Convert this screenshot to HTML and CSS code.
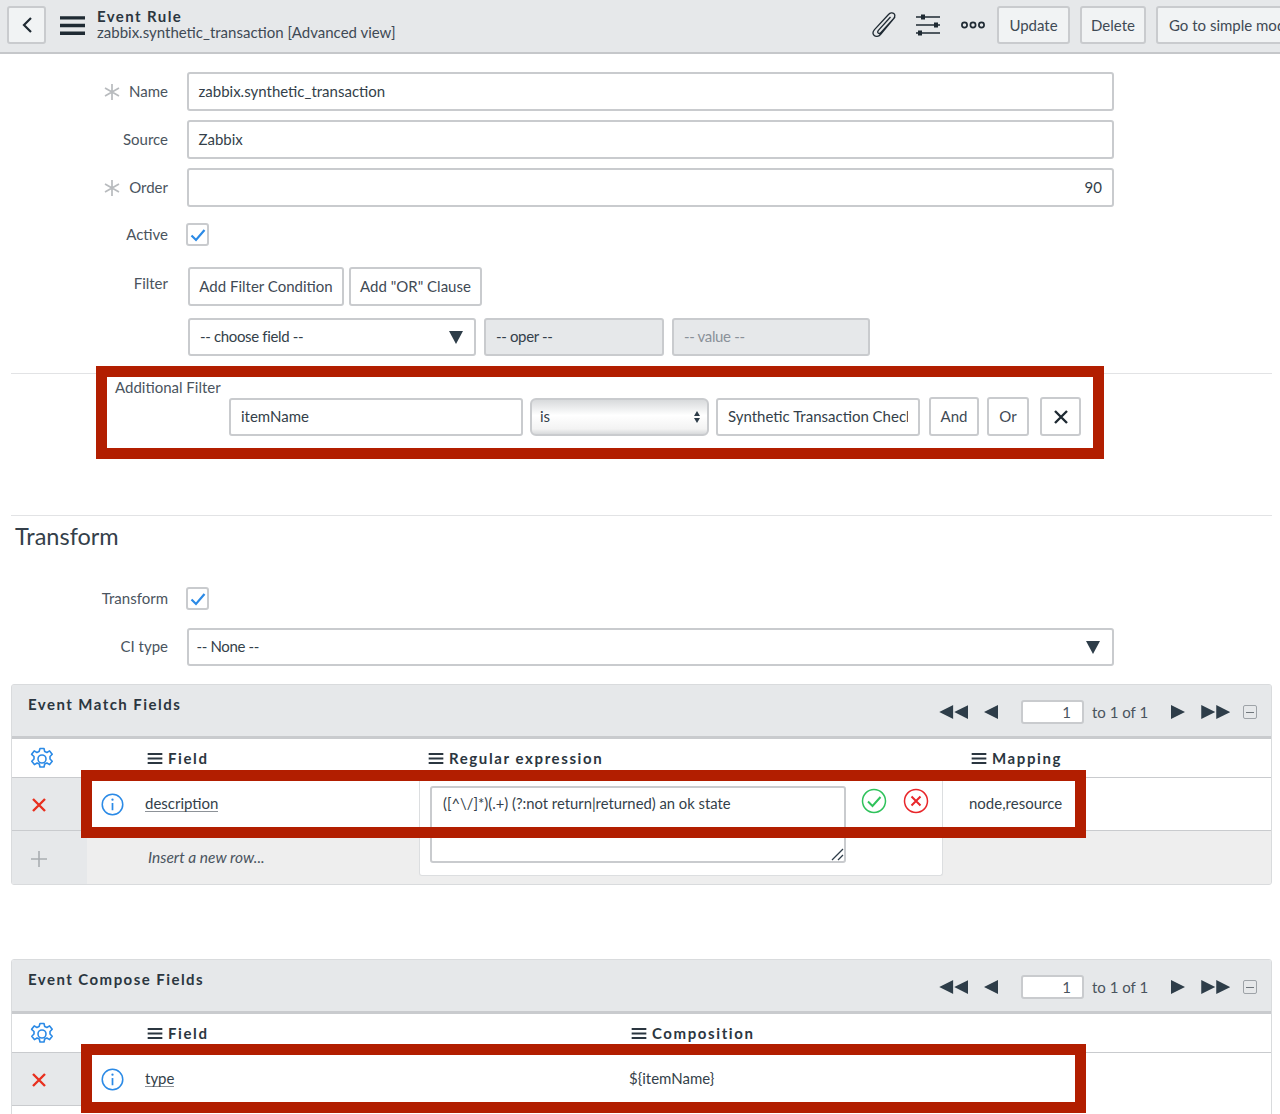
FILE: index.html
```html
<!DOCTYPE html>
<html lang="en">
<head>
    <meta charset="UTF-8">
    <meta name="viewport" content="width=device-width, initial-scale=1.0">
    <title>Event Rule</title>
    <link rel="stylesheet" href="styles.css">
</head>
<body>
    <svg class="defs" width="0" height="0">
        <symbol id="menu" viewBox="0 0 16 12"><path d="M0 1.100h16M0 6h16M0 10.900h16" stroke="currentColor" stroke-width="2.200" fill="none"/></symbol>
        <symbol id="star" viewBox="0 0 16 16"><path d="M8 0v16M1 4l14 8M15 4L1 12" stroke="#b8bbbe" stroke-width="1.700" fill="none"/></symbol>
        <symbol id="gear" viewBox="0 0 24 24"><g fill="none" stroke="#2b8ae6" stroke-width="1.600" stroke-linejoin="round"><path d="M10 1.500h4l.7 3 2.200 1 2.700-1.600 2.600 3.400-2.200 2.200v2.500l2.200 2.200-2.600 3.400-2.700-1.600-2.200 1-.7 3h-4l-.7-3-2.200-1-2.700 1.600-2.600-3.400 2.200-2.200V9.500L1.600 7.300l2.600-3.400 2.700 1.600 2.200-1z"/><circle cx="12" cy="12" r="4"/></g></symbol>
        <symbol id="info" viewBox="0 0 24 24"><circle cx="12" cy="12" r="10.700" fill="none" stroke="#2b8ae6" stroke-width="1.600"/><path d="M12 10.500v7.500" stroke="#2b8ae6" stroke-width="1.800"/><circle cx="12" cy="7" r="1.200" fill="#2b8ae6"/></symbol>
        <symbol id="cross" viewBox="0 0 16 16"><path d="M2 2l12 12M14 2L2 14" stroke="currentColor" stroke-width="2.400" fill="none"/></symbol>
        <symbol id="tri-left" viewBox="0 0 14 14"><path d="M14 0v14L0 7z" fill="#2e3d49"/></symbol>
        <symbol id="tri-right" viewBox="0 0 14 14"><path d="M0 0v14l14-7z" fill="#2e3d49"/></symbol>
    </svg>

    <div class="page">
        <header class="topbar">
            <button class="btn btn-back">
                <svg width="12" height="18" viewBox="0 0 12 18"><path d="M10 2L3 9l7 7" fill="none" stroke="#1f2a33" stroke-width="2.200"/></svg>
            </button>
            <svg class="topbar-menu"><use href="#menu"/></svg>
            <div class="topbar-title">
                <div class="topbar-name">Event Rule</div>
                <div class="topbar-sub">zabbix.synthetic_transaction [Advanced view]</div>
            </div>
            <div class="topbar-actions">
                <svg class="icon-clip" width="26" height="26" viewBox="0 0 26 26"><path d="M24 5L9.500 22.500c-2 2.300-4.800 2.400-6.300 1-1.500-1.400-1.400-3.900.3-5.900L17.500 2.500c1.700-1.900 4-2.100 5.300-.9 1.300 1.200 1.300 3.200-.3 5.100L10 20.500c-.9 1-2.100 1.100-2.800.5-.7-.7-.6-1.700.2-2.700L19.500 5" fill="none" stroke="#1f2a33" stroke-width="1.300"/></svg>
                <svg class="icon-sliders" width="26" height="24" viewBox="0 0 26 24"><g fill="#1f2a33"><path d="M1 4h24M1 12h24M1 20h24" stroke="#1f2a33" stroke-width="1.400"/><rect x="6" y="1.500" width="4" height="5"/><rect x="19" y="9.500" width="4" height="5"/><rect x="3" y="17.500" width="4" height="5"/></g></svg>
                <svg class="icon-dots" width="24" height="8" viewBox="0 0 24 8"><g fill="none" stroke="#1f2a33" stroke-width="1.700"><circle cx="3.500" cy="4" r="2.600"/><circle cx="12" cy="4" r="2.600"/><circle cx="20.500" cy="4" r="2.600"/></g></svg>
                <button class="btn btn-head btn-update">Update</button>
                <button class="btn btn-head btn-delete">Delete</button>
                <button class="btn btn-head btn-mode">Go to simple mode</button>
            </div>
        </header>

        <section class="form">
            <div class="row">
                <label class="row-label"><svg class="star"><use href="#star"/></svg>Name</label>
                <div class="field">zabbix.synthetic_transaction</div>
            </div>
            <div class="row">
                <label class="row-label">Source</label>
                <div class="field">Zabbix</div>
            </div>
            <div class="row">
                <label class="row-label"><svg class="star"><use href="#star"/></svg>Order</label>
                <div class="field field-number">90</div>
            </div>
            <div class="row row-check">
                <label class="row-label">Active</label>
                <span class="checkbox"><svg width="16" height="14" viewBox="0 0 16 14"><path d="M1.500 7.500l4.500 4.500 8.500-10" fill="none" stroke="#2b8ae6" stroke-width="2.200"/></svg></span>
            </div>
            <div class="row row-filter">
                <label class="row-label row-label-top">Filter</label>
                <button class="btn btn-filter btn-condition">Add Filter Condition</button>
                <button class="btn btn-filter btn-clause">Add "OR" Clause</button>
            </div>
            <div class="row row-choose">
                <div class="field field-dash select-choose">-- choose field --<span class="arrow-down"></span></div>
                <div class="field field-dash field-off field-oper">-- oper --</div>
                <div class="field field-dash field-off field-value">-- value --</div>
            </div>
        </section>

        <hr class="rule rule-filter">

        <section class="extra-filter">
            <div class="extra-label">Additional Filter</div>
            <div class="extra-row">
                <div class="field field-item">itemName</div>
                <div class="field field-op">is
                    <svg class="spinner" width="8" height="14" viewBox="0 0 8 14"><path d="M4 1l3 5H1zM4 13l3-5H1z" fill="#2e3d49"/></svg>
                </div>
                <div class="field field-check"><span class="clip">Synthetic Transaction Check</span></div>
                <button class="btn btn-and">And</button>
                <button class="btn btn-or">Or</button>
                <button class="btn btn-x"><svg width="16" height="16"><use href="#cross"/></svg></button>
            </div>
        </section>

        <hr class="rule rule-transform">
        <h2 class="section-title">Transform</h2>

        <section class="form form-transform">
            <div class="row row-check">
                <label class="row-label">Transform</label>
                <span class="checkbox"><svg width="16" height="14" viewBox="0 0 16 14"><path d="M1.500 7.500l4.500 4.500 8.500-10" fill="none" stroke="#2b8ae6" stroke-width="2.200"/></svg></span>
            </div>
            <div class="row row-ci">
                <label class="row-label">CI type</label>
                <div class="field field-dash select-ci">-- None --<span class="arrow-down"></span></div>
            </div>
        </section>

        <section class="list list-match">
            <div class="list-head">
                <div class="list-title">Event Match Fields</div>
                <div class="pager">
                    <span class="pager-pair"><svg><use href="#tri-left"/></svg><svg><use href="#tri-left"/></svg></span>
                    <svg class="pager-one"><use href="#tri-left"/></svg>
                    <span class="pager-input">1</span>
                    <span class="pager-text">to 1 of 1</span>
                    <svg class="pager-one pager-next"><use href="#tri-right"/></svg>
                    <span class="pager-pair"><svg><use href="#tri-right"/></svg><svg><use href="#tri-right"/></svg></span>
                    <span class="pager-collapse"></span>
                </div>
            </div>
            <div class="cols cols-match cols-head">
                <div class="cell-side"><svg class="gear"><use href="#gear"/></svg></div>
                <div class="col-name col-field"><svg><use href="#menu"/></svg>Field</div>
                <div class="col-name col-regex"><svg><use href="#menu"/></svg>Regular expression</div>
                <div class="col-name col-map"><svg><use href="#menu"/></svg>Mapping</div>
            </div>
            <div class="cols cols-match cols-body">
                <div class="cell-side cell-del"><svg class="del"><use href="#cross"/></svg></div>
                <div class="cell-field"><svg class="info"><use href="#info"/></svg><a class="cell-link">description</a></div>
                <div class="cell-regex">
                    <div class="textarea">([^\/]*)(.+) (?:not return|returned) an ok state
                        <svg class="grip" width="14" height="14" viewBox="0 0 14 14"><path d="M2 13L13 2M8 13l5-5" stroke="#2e3d49" stroke-width="1.300"/></svg>
                    </div>
                    <svg class="round" width="26" height="26" viewBox="0 0 26 26"><circle cx="13" cy="13" r="11.500" fill="none" stroke="#2fc25b" stroke-width="1.500"/><path d="M7 13.500l4.500 4.500 8-9" fill="none" stroke="#2fc25b" stroke-width="2"/></svg>
                    <svg class="round" width="26" height="26" viewBox="0 0 26 26"><circle cx="13" cy="13" r="11.500" fill="none" stroke="#e8262a" stroke-width="1.500"/><path d="M8.500 8.500l9 9M17.500 8.500l-9 9" fill="none" stroke="#e8262a" stroke-width="2"/></svg>
                </div>
                <div class="cell-map">node,resource</div>
                <div class="cell-side cell-add"><svg width="16" height="16" viewBox="0 0 16 16"><path d="M8 0v16M0 8h16" stroke="#a9adb1" stroke-width="1.600"/></svg></div>
                <div class="cell-insert">Insert a new row...</div>
            </div>
        </section>

        <section class="list list-compose">
            <div class="list-head">
                <div class="list-title">Event Compose Fields</div>
                <div class="pager">
                    <span class="pager-pair"><svg><use href="#tri-left"/></svg><svg><use href="#tri-left"/></svg></span>
                    <svg class="pager-one"><use href="#tri-left"/></svg>
                    <span class="pager-input">1</span>
                    <span class="pager-text">to 1 of 1</span>
                    <svg class="pager-one pager-next"><use href="#tri-right"/></svg>
                    <span class="pager-pair"><svg><use href="#tri-right"/></svg><svg><use href="#tri-right"/></svg></span>
                    <span class="pager-collapse"></span>
                </div>
            </div>
            <div class="cols cols-compose cols-head">
                <div class="cell-side"><svg class="gear"><use href="#gear"/></svg></div>
                <div class="col-name col-field"><svg><use href="#menu"/></svg>Field</div>
                <div class="col-name col-comp"><svg><use href="#menu"/></svg>Composition</div>
            </div>
            <div class="cols cols-compose cols-body">
                <div class="cell-side cell-del"><svg class="del"><use href="#cross"/></svg></div>
                <div class="cell-field"><svg class="info"><use href="#info"/></svg><a class="cell-link">type</a></div>
                <div class="cell-comp">${itemName}</div>
            </div>
        </section>

        <!-- red annotation boxes drawn over the screenshot -->
        <div class="mark mark-filter"></div>
        <div class="mark mark-match"></div>
        <div class="mark mark-compose"></div>
    </div>
</body>
</html>
```

FILE: styles.css
```css
* {
    box-sizing: border-box;
}
html, body {
    margin: 0;
    height: 1114px;
    overflow: hidden;
}
body {
    font-family: "Lato", "Noto Sans", sans-serif;
    font-size: 15px;
    color: #343f4a;
    background: #fff;
}
.defs {
    position: absolute;
}
.page {
    position: relative;
    height: 1114px;
    overflow: hidden;
}

/* buttons and inputs */
.btn {
    font: inherit;
    color: #3f4a55;
    background: #fff;
    border: 2px solid #c9cbce;
    border-radius: 3px;
    height: 39px;
    padding: 0 0 2px;
    display: flex;
    align-items: center;
    justify-content: center;
    flex: none;
}
.field {
    height: 39px;
    border: 2px solid #c9cbce;
    border-radius: 3px;
    background: #fff;
    padding: 0 10px 2px;
    display: flex;
    align-items: center;
    color: #343f4a;
    position: relative;
}
.field-dash {
    letter-spacing: -0.35px;
}

/* top bar */
.topbar {
    height: 54px;
    background: #e6e8ea;
    border-bottom: 2px solid #c5c7ca;
    display: flex;
    align-items: center;
    padding: 0 0 2px 7px;
    white-space: nowrap;
}
.btn-back {
    width: 39px;
    height: 38px;
    padding: 0;
    background: #f1f3f4;
}
.topbar-menu {
    width: 25px;
    height: 19px;
    margin-left: 14px;
    color: #1f2a33;
}
.topbar-title {
    margin-left: 12px;
    padding-bottom: 3px;
}
.topbar-name {
    font-weight: 700;
    font-size: 15px;
    line-height: 16px;
    letter-spacing: 1.4px;
    color: #2b3640;
}
.topbar-sub {
    font-size: 15px;
    line-height: 16px;
    color: #3f4a55;
}
.topbar-actions {
    margin-left: auto;
    display: flex;
    align-items: center;
}
.btn-head {
    background: #f1f3f4;
    height: 38px;
    font-size: 15px;
    padding-bottom: 1px;
}
.icon-clip {
    margin-right: 18px;
}
.icon-sliders {
    margin-right: 20px;
}
.icon-dots {
    margin-right: 12px;
}
.btn-update {
    width: 73px;
}
.btn-delete {
    width: 66px;
    margin-left: 10px;
}
.btn-mode {
    width: 140px;
    margin-left: 10px;
    margin-right: -16px;
    justify-content: flex-start;
    padding-left: 11px;
    overflow: hidden;
}

/* form rows */
.form {
    padding-top: 18px;
}
.row {
    display: flex;
    align-items: center;
    margin-bottom: 9px;
}
.row-label {
    width: 168px;
    text-align: right;
    margin-right: 18.5px;
    padding-bottom: 2px;
    flex: none;
    color: #4a545e;
}
.row-check .row-label {
    padding-bottom: 1px;
}
.row-label-top {
    margin-bottom: 6px;
}
.star {
    width: 16px;
    height: 16px;
    margin-right: 9px;
    vertical-align: -3px;
}
.row > .field {
    width: 927.500px;
}
.field-number {
    justify-content: flex-end;
}
.row-check {
    height: 23px;
    margin-top: 16px;
    margin-bottom: 21px;
}
.checkbox {
    width: 23px;
    height: 23px;
    margin-left: -0.5px;
    border: 2px solid #c9cbce;
    border-radius: 3px;
    display: flex;
    align-items: center;
    justify-content: center;
}
.row-filter {
    margin-bottom: 12px;
}
.btn-filter {
    margin-right: 5px;
}
.btn-condition {
    margin-left: 1.5px;
    width: 156px;
}
.btn-clause {
    width: 133px;
}
.row-choose {
    padding-left: 188px;
    margin-bottom: 0;
}
.row-choose > .field {
    height: 38px;
}
.row > .select-choose {
    width: 288px;
    justify-content: flex-start;
}
.arrow-down {
    position: absolute;
    right: 11px;
    top: 11px;
    border-left: 7.500px solid transparent;
    border-right: 7.500px solid transparent;
    border-top: 13px solid #2e3d49;
}
.row > .field-oper {
    width: 180px;
    margin-left: 8px;
}
.row > .field-value {
    width: 198px;
    margin-left: 8px;
    color: #8a9199;
}
.field-off {
    background: #e6e8ea;
}

/* divider lines */
.rule {
    border: 0;
    border-top: 1px solid #e2e3e5;
    margin: 0 8px 0 11px;
}
.rule-filter {
    margin-top: 17px;
}

/* additional filter */
.extra-filter {
    height: 141px;
    padding-left: 115px;
    color: #4a545e;
}
.extra-label {
    padding-top: 4px;
    line-height: 18px;
}
.extra-row {
    display: flex;
    align-items: center;
    margin: 1px 0 0 114px;
}
.extra-row .field {
    height: 38px;
}
.field-item {
    width: 294px;
}
.field-op {
    width: 179px;
    margin-left: 7px;
    background: linear-gradient(#d8dadc, #fff 45%, #f3f3f3 85%, #d8dadc);
    border-radius: 6px;
    padding-left: 8px;
}
.spinner {
    position: absolute;
    right: 6px;
    top: 10px;
}
.field-check {
    width: 204px;
    margin-left: 7px;
    padding-right: 10px;
}
.clip {
    display: block;
    white-space: nowrap;
    overflow: hidden;
}
.btn-and {
    width: 50px;
    margin-left: 9px;
}
.btn-or {
    width: 42px;
    margin-left: 8px;
}
.btn-x {
    width: 41px;
    margin-left: 11px;
    padding: 0;
    color: #1f2a33;
}

/* transform section */
.section-title {
    font-size: 23.500px;
    font-weight: 400;
    margin: 6px 0 0 15px;
    line-height: 28px;
    color: #343f4a;
}
.form-transform {
    padding-top: 0;
}
.form-transform .row-check {
    margin-top: 37px;
    margin-bottom: 18px;
}
.row-ci {
    margin-bottom: 18px;
}
.row > .select-ci {
    height: 38px;
    padding-left: 8px;
}
.select-ci .arrow-down {
    right: 12px;
}

/* related lists */
.list {
    margin: 0 8px 0 11px;
    border: 1px solid #d9dbdd;
    border-radius: 3px;
    overflow: hidden;
}
.list-match {
    height: 201px;
    background: #eee;
}
.list-compose {
    margin-top: 74px;
    height: 200px;
}
.list-head {
    height: 54px;
    background: #e6e8ea;
    border-bottom: 3px solid #c9cbce;
    display: flex;
    justify-content: space-between;
    padding-left: 16px;
}
.list-title {
    font-weight: 700;
    font-size: 15px;
    letter-spacing: 1.450px;
    line-height: 18px;
    padding-top: 10px;
    color: #2b3640;
}
.pager {
    display: flex;
    align-items: center;
    height: 50px;
    padding: 4px 14px 0 0;
    color: #4a545e;
}
.pager svg {
    width: 14px;
    height: 14px;
    display: block;
}
.pager-pair {
    display: flex;
}
.pager-pair svg {
    width: 14.500px;
}
.pager-one {
    margin-left: 16px;
}
.pager-input {
    width: 63px;
    height: 24px;
    border: 2px solid #c9cbce;
    border-radius: 3px;
    background: #fff;
    text-align: right;
    padding-right: 11px;
    line-height: 21px;
    margin-left: 23px;
}
.pager-text {
    margin-left: 8px;
    width: 56px;
    white-space: nowrap;
}
.pager-next {
    margin-left: 23px;
    margin-right: 16px;
}
.pager-collapse {
    width: 14px;
    height: 14px;
    border: 1px solid #9ea3a8;
    border-radius: 2px;
    margin-left: 13px;
    background: linear-gradient(#6f767c, #6f767c) center / 8px 1px no-repeat;
}

.cols {
    display: grid;
    background: #fff;
}
.cols-match {
    grid-template-columns: 75px 332px 524px 1fr;
}
.cols-compose {
    grid-template-columns: 75px 534px 1fr;
}
.cols-head {
    height: 39px;
    border-bottom: 1px solid #c9cbce;
    align-items: center;
}
.cols-head .cell-side {
    padding-top: 2px;
}
.cols-body {
    grid-auto-rows: 53px;
    background: #eee;
}
.cols-compose.cols-body {
    background: #fff;
}
.cell-side {
    display: flex;
    align-items: center;
    padding-left: 18px;
}
.cell-del,
.cell-add {
    background: #e6e8ea;
    border-bottom: 1px solid #c9cbce;
    padding-left: 19px;
    padding-top: 2px;
}
.cell-add {
    border-bottom: 0;
}
.gear {
    width: 24px;
    height: 24px;
}
.del {
    width: 16px;
    height: 16px;
    color: #e8301f;
}
.col-name {
    font-weight: 700;
    font-size: 15px;
    letter-spacing: 1.600px;
    color: #2b3640;
    display: flex;
    align-items: center;
}
.col-name svg {
    width: 16px;
    height: 11px;
    margin-right: 5px;
}
.col-field {
    padding-left: 60px;
}
.col-regex {
    padding-left: 9px;
}
.col-map {
    padding-left: 28px;
}
.col-comp {
    padding-left: 10px;
}
.cell-field {
    background: #fff;
    display: flex;
    align-items: center;
    padding: 0 0 0 14px;
    border-bottom: 1px solid #c9cbce;
}
.info {
    width: 23px;
    height: 23px;
    margin-right: 21px;
}
.cell-link {
    border-bottom: 1px solid #8d9298;
    line-height: 16px;
    margin-bottom: 2px;
}
.cell-regex {
    grid-row: span 2;
    background: #fff;
    margin-bottom: 8px;
    border: 1px solid #dcdee0;
    border-top: 0;
    border-radius: 0 0 3px 3px;
    padding: 8px 0 0 10px;
    display: flex;
    align-items: flex-start;
}
.textarea {
    width: 416px;
    height: 77px;
    border: 2px solid #c9cbce;
    border-radius: 3px;
    padding: 6px 11px;
    font-size: 14.800px;
    position: relative;
    margin-right: 15px;
    flex: none;
}
.grip {
    position: absolute;
    right: 0;
    bottom: 0;
}
.round {
    margin-top: 2px;
    margin-right: 16px;
    flex: none;
}
.cell-map {
    background: #fff;
    border-bottom: 1px solid #c9cbce;
    display: flex;
    align-items: center;
    padding: 0 0 2px 26px;
}
.cell-insert {
    font-style: italic;
    font-size: 15.500px;
    padding: 17px 0 0 61px;
    color: #4a545e;
}
.cell-comp {
    background: #fff;
    display: flex;
    align-items: center;
    padding: 0 0 4px 8px;
}

/* red annotation boxes */
.mark {
    position: absolute;
    border: 11px solid #b21e00;
}
.mark-filter {
    left: 96px;
    top: 366px;
    width: 1008px;
    height: 93px;
}
.mark-match {
    left: 81px;
    top: 770px;
    width: 1005px;
    height: 68px;
}
.mark-compose {
    left: 81px;
    top: 1044px;
    width: 1005px;
    height: 69px;
}
```
